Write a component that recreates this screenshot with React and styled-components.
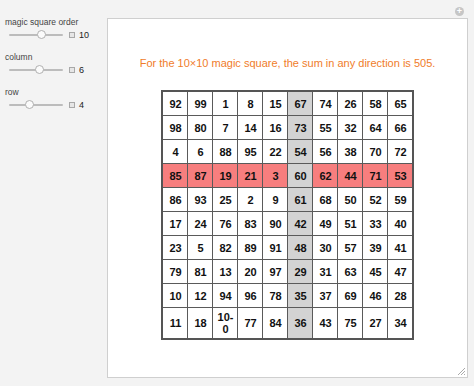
import { createGlobalStyle } from 'styled-components'
import styled from 'styled-components'

const GlobalStyle = createGlobalStyle`
	html, body {
		margin: 0;
		padding: 0;
		background: #f3f3f3;
		font-family: "Liberation Sans", Arial, sans-serif;
	}
`

let Page = styled.div`
	display: flex;
	width: 474px;
	height: 386px;
	background: #f3f3f3;
	overflow: hidden;
`

let Controls = styled.div`
	width: 107px;
	padding-top: 17px;
	display: flex;
	flex-direction: column;
	gap: 10px;
`

let Control = styled.div`
	display: flex;
	flex-direction: column;
	gap: 0;
	padding-left: 5px;
`

let Label = styled.div`
	font-size: 8.5px;
	color: #444;
	height: 11px;
	line-height: 11px;
`

let SliderRow = styled.div`
	display: flex;
	align-items: center;
	height: 14px;
	padding-left: 4px;
`

let Track = styled.div`
	position: relative;
	width: 54px;
	height: 2px;
	background: #bcbcbc;
	border-radius: 1px;
`

let Thumb = styled.div`
	position: absolute;
	top: -4px;
	width: 9px;
	height: 9px;
	margin-left: -5px;
	border-radius: 50%;
	background: #fbfbfb;
	border: 1px solid #b0b0b0;
	box-sizing: border-box;
`

let PlusBox = styled.div`
	width: 4px;
	height: 4px;
	margin-left: 6px;
	border: 1px solid #a8a8a8;
	background: #e6e6e6;
`

let Value = styled.div`
	margin-left: 4px;
	font-size: 9px;
	color: #222;
`

let Right = styled.div`
	position: relative;
	padding-top: 18px;
`

let Panel = styled.div`
	width: 359px;
	height: 358px;
	background: #fff;
	border: 1px solid #cfcfcf;
	display: flex;
	flex-direction: column;
	align-items: center;
	position: relative;
`

let Title = styled.div`
	margin-top: 36px;
	font-size: 11px;
	color: #f07c2a;
	height: 16px;
	line-height: 16px;
`

let Grid = styled.table`
	margin-top: 19px;
	border-collapse: collapse;
	border: 2px solid #555;
`

let Cell = styled.td`
	width: 23px;
	height: ${props => props.tall ? 30 : 23}px;
	padding: 0 0 0 1px;
	border: 1.5px solid #5a5a5a;
	text-align: center;
	font-size: 11px;
	font-weight: bold;
	color: #111;
	line-height: 12px;
	background: ${props => props.col ? '#d3d3d3' : props.row ? '#f77e7e' : '#fff'};
	word-break: break-all;
`

let Plus = styled.div`
	position: absolute;
	top: 7px;
	right: 4px;
	width: 9px;
	height: 9px;
	border-radius: 50%;
	background: #c6c6c6;
	display: flex;
	align-items: center;
	justify-content: center;
	color: #fff;
	font-size: 9px;
	font-weight: bold;
	line-height: 9px;
`

let Grip = styled.svg`
	position: absolute;
	right: 1px;
	bottom: 1px;
`

const square = [
	[92, 99, 1, 8, 15, 67, 74, 26, 58, 65],
	[98, 80, 7, 14, 16, 73, 55, 32, 64, 66],
	[4, 6, 88, 95, 22, 54, 56, 38, 70, 72],
	[85, 87, 19, 21, 3, 60, 62, 44, 71, 53],
	[86, 93, 25, 2, 9, 61, 68, 50, 52, 59],
	[17, 24, 76, 83, 90, 42, 49, 51, 33, 40],
	[23, 5, 82, 89, 91, 48, 30, 57, 39, 41],
	[79, 81, 13, 20, 97, 29, 31, 63, 45, 47],
	[10, 12, 94, 96, 78, 35, 37, 69, 46, 28],
	[11, 18, 100, 77, 84, 36, 43, 75, 27, 34],
]

const sliders = [
	{ label: 'magic square order', pos: 0.62, value: '10' },
	{ label: 'column', pos: 0.57, value: '6' },
	{ label: 'row', pos: 0.38, value: '4' },
]

function App() {
	let column = 5
	let row = 3

	return (
		<Page>
			<GlobalStyle />
			<Controls>
				{sliders.map((s) => (
					<Control key={s.label}>
						<Label>{s.label}</Label>
						<SliderRow>
							<Track>
								<Thumb style={{ left: s.pos * 54 + 'px' }} />
							</Track>
							<PlusBox />
							<Value>{s.value}</Value>
						</SliderRow>
					</Control>
				))}
			</Controls>
			<Right>
				<Plus>+</Plus>
				<Panel>
					<Title>For the 10×10 magic square, the sum in any direction is 505.</Title>
					<Grid>
						<tbody>
							{square.map((r, i) => (
								<tr key={i}>
									{r.map((n, j) => (
										<Cell key={j} col={j == column} row={i == row} tall={i == 9}>
											{n == 100 ? <>10-<br />0</> : n}
										</Cell>
									))}
								</tr>
							))}
						</tbody>
					</Grid>
					<Grip width="10" height="10" viewBox="0 0 10 10">
						<path d="M9 2 L2 9 M9 5 L5 9 M9 8 L8 9" stroke="#aaa" strokeWidth="1" />
					</Grip>
				</Panel>
			</Right>
		</Page>
	)
}

export default App
